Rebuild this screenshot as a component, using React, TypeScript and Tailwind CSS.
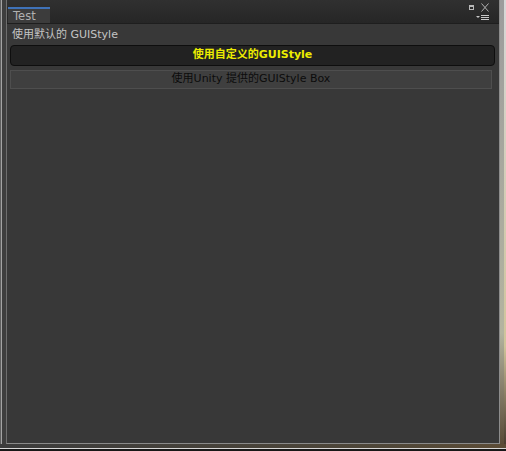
export default function App() {
  return (
    <div className="w-[506px] h-[451px] flex flex-col bg-[#1c1c1c] font-['DejaVu_Sans','Noto_Sans_CJK_SC',sans-serif] overflow-hidden">
      <div className="flex flex-1 min-h-0">
        {/* left frame */}
        <div className="w-[6px] flex bg-[#464646]">
          <div className="w-px bg-[#5e5e5e]" />
          <div className="w-px bg-[#a4a4a4]" />
          <div className="flex-1 bg-[#3e3e3e]" />
        </div>

        {/* panel */}
        <div className="flex-1 flex flex-col border-l border-r border-b border-l-[#6e6e6e] border-r-[#8c8c8c] border-b-[#8a8a8a]">
          {/* header */}
          <div className="h-[24px] flex items-end border-b border-[#1e1e1e] bg-gradient-to-b from-[#303030] to-[#262626]">
            <div className="ml-px w-[42px] h-[16px] bg-[#3c3c3c] border-t-2 border-[#3f72b8] text-[11.5px] leading-[14px] text-[#b0b0b0] pl-[5px]">
              Test
            </div>
            <div className="flex-1" />
            <div className="relative w-[30px] h-full">
              <div className="absolute left-[0px] top-[5px] w-[5px] h-[5px] border border-[#b8b8b8] border-t-2" />
              <svg className="absolute left-[12px] top-[3px]" width="8" height="9" viewBox="0 0 8 9">
                <path d="M0.5 0.5 L7.5 8.5 M7.5 0.5 L0.5 8.5" stroke="#b0b0b0" strokeWidth="1" />
              </svg>
              <svg className="absolute left-[7px] top-[15px]" width="13" height="5" viewBox="0 0 13 5">
                <path d="M0 1 H4 L2 3 Z" fill="#c8c8c8" />
                <path d="M5 0.5 H13 M5 2.5 H13 M5 4.5 H13" stroke="#c8c8c8" strokeWidth="1" />
              </svg>
            </div>
          </div>

          {/* content */}
          <div className="flex-1 bg-[#383838] flex flex-col pt-[1px]">
            <div className="pl-[5px] h-[19px] text-[11px] leading-[19px] text-[#c4c4c4]">
              使用默认的 GUIStyle
            </div>
            <div className="ml-[3px] mr-[4px] mt-[1px] h-[21px] rounded-[4px] bg-[#222222] border border-[#0e0e0e] flex items-center justify-center text-[11px] font-bold text-[#ecec00]">
              使用自定义的GUIStyle
            </div>
            <div className="ml-[3px] mr-[7px] mt-[4px] h-[19px] bg-[#3f3f3f] border border-[#4e4e4e] flex items-center justify-center text-[11px] text-[#0c0c0c]">
              使用Unity 提供的GUIStyle Box
            </div>
          </div>
        </div>

        {/* right frame */}
        <div className="w-[6px] flex">
          <div className="w-[4px] bg-gradient-to-b from-[#9c9c9c] via-[#b4b4a0] via-75% to-[#5a4c38]" />
          <div className="w-[2px] bg-gradient-to-b from-[#d8d8d8] via-[#d0c49a] via-78% to-[#4a3e30]" />
        </div>
      </div>

      {/* bottom frame */}
      <div className="h-[7px] flex flex-col">
        <div className="h-[4px] bg-gradient-to-r from-[#3c3c3c] via-[#4e4638] via-75% to-[#5c4c36]" />
        <div className="h-px bg-[#d8d8d8]" />
        <div className="h-[2px] bg-[#181818]" />
      </div>
    </div>
  )
}
